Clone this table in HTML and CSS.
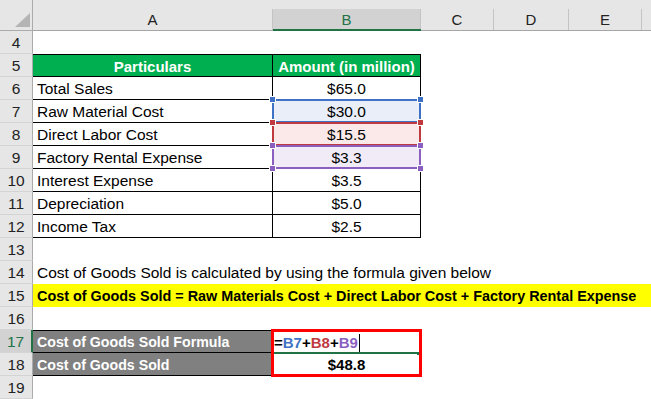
FILE: index.html
```html
<!DOCTYPE html>
<html>
<head>
<meta charset="utf-8">
<link rel="stylesheet" href="styles.css">
</head>
<body>
<div class="sheet">
  <!-- column headers -->
  <div class="corner"><span class="tri"></span></div>
  <div class="ch"><span>A</span></div>
  <div class="ch sel"><span>B</span></div>
  <div class="ch"><span>C</span></div>
  <div class="ch"><span>D</span></div>
  <div class="ch"><span>E</span></div>
  <div class="ch last"><span></span></div>

  <!-- row 4 -->
  <div class="rh">4</div><div class="c w6"></div>

  <!-- row 5 -->
  <div class="rh">5</div>
  <div class="c t top hd">Particulars</div>
  <div class="c t top hd">Amount (in million)</div>
  <div class="c w3"></div>

  <div class="rh">6</div><div class="c t">Total Sales</div><div class="c t num">$65.0</div><div class="c w3"></div>
  <div class="rh">7</div><div class="c t">Raw Material Cost</div><div class="c t num rng blue">$30.0<i class="h tl"></i><i class="h tr"></i><i class="h bl"></i><i class="h br"></i></div><div class="c w3"></div>
  <div class="rh">8</div><div class="c t">Direct Labor Cost</div><div class="c t num rng red">$15.5<i class="h tl"></i><i class="h tr"></i><i class="h bl"></i><i class="h br"></i></div><div class="c w3"></div>
  <div class="rh">9</div><div class="c t">Factory Rental Expense</div><div class="c t num rng purple">$3.3<i class="h tl"></i><i class="h tr"></i><i class="h bl"></i><i class="h br"></i></div><div class="c w3"></div>
  <div class="rh">10</div><div class="c t">Interest Expense</div><div class="c t num">$3.5</div><div class="c w3"></div>
  <div class="rh">11</div><div class="c t">Depreciation</div><div class="c t num">$5.0</div><div class="c w3"></div>
  <div class="rh">12</div><div class="c t">Income Tax</div><div class="c t num">$2.5</div><div class="c w3"></div>

  <div class="rh">13</div><div class="c w6"></div>
  <div class="rh">14</div><div class="c w6 txt">Cost of Goods Sold is calculated by using the formula given below</div>
  <div class="rh">15</div><div class="c w6 yellow">Cost of Goods Sold = Raw Materials Cost + Direct Labor Cost + Factory Rental Expense</div>
  <div class="rh">16</div><div class="c w6"></div>

  <div class="rh act">17</div>
  <div class="c t top gray">Cost of Goods Sold Formula</div>
  <div class="c t top formula"><span class="eq">=</span><span class="fb">B7</span><span class="eq">+</span><span class="fr">B8</span><span class="eq">+</span><span class="fp">B9</span><span class="cursor"></span><span class="active"></span><span class="fill"></span><span class="redbox"></span></div>
  <div class="c w3"></div>

  <div class="rh">18</div>
  <div class="c t gray">Cost of Goods Sold</div>
  <div class="c t num bold">$48.8</div>
  <div class="c w3"></div>

  <div class="rh">19</div><div class="c w6"></div>
</div>
</body>
</html>
```
FILE: styles.css
```css
* { box-sizing: border-box; }
html, body { margin: 0; padding: 0; background: #fff; overflow: hidden; }
body { font-family: "Liberation Sans", Arial, sans-serif; font-size: 15.5px; color: #000; }

.sheet {
  display: grid;
  grid-template-columns: 33px 240px 148px 73px 75px 73px 9px;
  grid-template-rows: 31px repeat(16, 23px);
  width: 651px;
  height: 399px;
}

.corner { background: #e6e6e6; border-right: 1px solid #ababab; border-bottom: 1px solid #ababab; position: relative; }
.tri {
  position: absolute; left: 15px; top: 13px;
  width: 15px; height: 14px;
  background: #b4b4b4;
  clip-path: polygon(100% 0, 100% 100%, 0 100%);
}

.ch { background: #e6e6e6; padding-top: 9px; border-bottom: 1px solid #a6a6a6; }
.ch span { display: block; height: 100%; border-right: 1px solid #c4c4c4; text-align: center; line-height: 22px; font-size: 15px; color: #222; }
.ch.sel { border-bottom: 2px solid #217346; }
.ch.sel span { background: #d2d2d2; color: #217346; }
.ch.last span { border-right: none; }

.rh { background: #e6e6e6; border-right: 1px solid #ababab; border-bottom: 1px solid #d4d4d4; text-align: center; line-height: 24px; font-size: 15.5px; color: #222; }
.rh.act { background: #d2d2d2; color: #217346; border-right: 2px solid #217346; }

.c { line-height: 22px; padding-top: 1px; padding-left: 4px; white-space: nowrap; }
.w6 { grid-column: span 6; }
.w3 { grid-column: span 4; }
.t { border-right: 1px solid #000; border-bottom: 1px solid #000; }
.top { border-top: 1px solid #000; line-height: 21px; }
.hd { background: #00b050; color: #fff; font-weight: bold; font-size: 15px; text-align: center; padding-left: 0; }
.num { text-align: center; padding-left: 0; }
.bold { font-weight: bold; font-size: 15px; }

.rng { position: relative; }
.rng::before { content: ""; position: absolute; left: -1px; top: -1px; right: -1px; bottom: -1px; border: 2px solid var(--rc); }
.blue { --rc: #3f72c4; background: #e9eef8; }
.red { --rc: #c0393f; background: #fae9e8; }
.purple { --rc: #8a5fbf; background: #f0ebf7; }
.h { position: absolute; width: 5px; height: 5px; background: var(--rc); border: 1px solid #fff; box-sizing: content-box; }
.h.tl { left: -4px; top: -4px; }
.h.tr { right: -4px; top: -4px; }
.h.bl { left: -4px; bottom: -4px; }
.h.br { right: -4px; bottom: -4px; }

.txt { padding-left: 4px; }
.yellow { background: #ffff00; font-weight: bold; font-size: 14.4px; margin-right: -3px; grid-column: span 6; }

.gray { background: #808080; color: #fff; font-weight: bold; font-size: 14.2px; }

.formula { position: relative; padding-left: 1px; font-weight: bold; font-size: 15px; }
.eq { color: #000; }
.fb { color: #3f72c4; }
.fr { color: #c0393f; }
.fp { color: #8a5fbf; }
.cursor { display: inline-block; width: 1px; height: 20px; background: #000; vertical-align: middle; margin-left: 1px; }
.active { position: absolute; left: 0; right: 3px; bottom: -2px; height: 2px; background: #217346; }
.fill { position: absolute; right: 0; bottom: -3px; width: 3px; height: 3px; background: #217346; }
.redbox { position: absolute; left: -2px; top: -2px; width: 151px; height: 48px; border: 3px solid #ff0000; }
```
